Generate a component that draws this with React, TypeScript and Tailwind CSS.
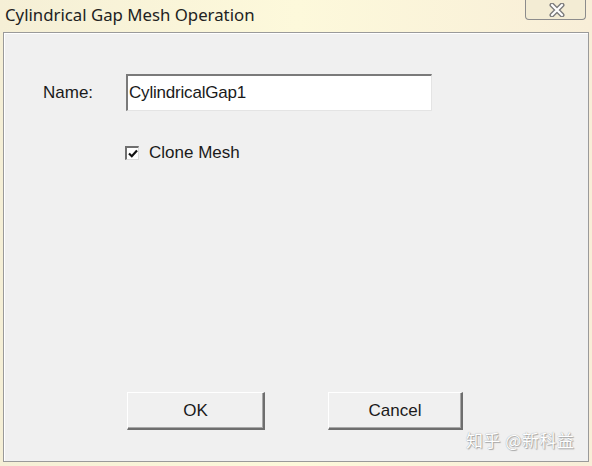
export default function App() {
  return (
    <div className="flex h-[466px] w-[592px] flex-col overflow-hidden bg-gradient-to-r from-[#f5efd6] via-[#fdf9db] to-[#f8eed8] font-['Liberation_Sans',Arial,sans-serif]">
      <TitleBar />
      <div className="mx-[3px] flex h-[430px] flex-col border border-[#9a9a9a] bg-[#f0f0f0] shadow-[inset_1px_1px_0_#ffffff]">
        <div className="mt-[41px] flex items-center">
          <div className="w-[122px] pl-[39px] text-[17px] text-[#1a1a1a]">Name:</div>
          <div className="flex h-[37px] w-[306px] items-center border-t-2 border-l-2 border-r border-b border-t-[#7a7a7a] border-l-[#7a7a7a] border-r-[#e4e4e4] border-b-[#e4e4e4] bg-white pl-[1px] text-[17px] tracking-[-0.2px] text-[#1a1a1a]">
            CylindricalGap1
          </div>
        </div>
        <div className="mt-[29px] ml-[121px] flex items-center gap-[10px]">
          <Checkbox />
          <span className="text-[17px] text-[#1a1a1a]">Clone Mesh</span>
        </div>
        <div className="mt-auto mb-[31px] flex items-end">
          <DialogButton label="OK" className="ml-[123px] w-[138px]" />
          <DialogButton label="Cancel" className="ml-[63px] w-[135px]" />
          <div className="mb-[-22px] ml-[3px] font-['Noto_Sans_CJK_SC',sans-serif] text-[17px] tracking-[0.5px] text-white [text-shadow:0_0_1px_#8f8f8f,1px_1px_1px_#a8a8a8]">
            知乎 @新科益
          </div>
        </div>
      </div>
    </div>
  );
}

function TitleBar() {
  return (
    <div className="flex h-[32px] shrink-0 items-start justify-between">
      <div className="pt-[2px] pl-[5px] font-['Noto_Sans',sans-serif] text-[16.8px] text-[#222222]">
        Cylindrical Gap Mesh Operation
      </div>
      <div className="mr-[6px] flex h-[20px] w-[61px] items-center justify-center rounded-b-[4px] border border-t-0 border-[#8c8c8c] bg-[#f3ecd4] pl-[3px]">
        <svg width="16" height="14" viewBox="0 0 16 14">
          <path d="M3 2 L13 12 M13 2 L3 12" stroke="#7d7d7d" strokeWidth="5" strokeLinecap="round" />
          <path d="M3 2 L13 12 M13 2 L3 12" stroke="#ffffff" strokeWidth="2.2" strokeLinecap="round" />
        </svg>
      </div>
    </div>
  );
}

function Checkbox() {
  return (
    <div className="flex h-[14px] w-[14px] items-center justify-center border-t-2 border-l-2 border-r border-b border-t-[#6f6f6f] border-l-[#6f6f6f] border-r-[#dcdcdc] border-b-[#dcdcdc] bg-white">
      <svg width="10" height="9" viewBox="0 0 10 9">
        <path d="M1 4.5 L3.8 7.2 L9 1.5" fill="none" stroke="#111111" strokeWidth="2.2" />
      </svg>
    </div>
  );
}

function DialogButton({ label, className }: { label: string; className: string }) {
  return (
    <button
      type="button"
      className={`flex h-[38px] items-center justify-center border-t border-l border-r-2 border-b-2 border-t-[#ffffff] border-l-[#ffffff] border-r-[#6e6e6e] border-b-[#6e6e6e] bg-[#f0f0f0] text-[17px] text-[#1a1a1a] shadow-[inset_-1px_-1px_0_#a8a8a8] ${className}`}
    >
      {label}
    </button>
  );
}
